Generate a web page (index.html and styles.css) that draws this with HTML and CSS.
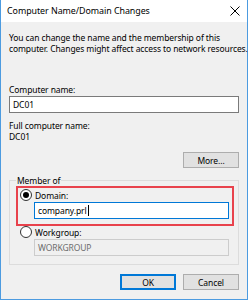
FILE: index.html
```html
<!DOCTYPE html>
<html>
<head>
<meta charset="utf-8">
<link rel="stylesheet" href="styles.css">
</head>
<body>
<div class="window">
  <div class="titlebar">
    <span class="title">Computer Name/Domain Changes</span>
    <svg class="close" width="10" height="10" viewBox="0 0 10 10"><path d="M0.5 0.5 L9.5 9.5 M9.5 0.5 L0.5 9.5" stroke="#000" stroke-width="1" fill="none"/></svg>
  </div>
  <div class="content">
    <p class="desc">You can change the name and the membership of this<br>computer. Changes might affect access to network resources.</p>
    <div class="label l-compname">Computer name:</div>
    <div class="input">DC01</div>
    <div class="label l-full">Full computer name:</div>
    <div class="label">DC01</div>
    <div class="row-right"><div class="btn more">More...</div></div>
    <fieldset class="group">
      <legend>Member of</legend>
      <div class="highlight">
        <div class="radio-row"><span class="radio checked"></span><span>Domain:</span></div>
        <div class="input focus sub">company.prl<span class="caret"></span></div>
      </div>
      <div class="radio-row wg"><span class="radio"></span><span>Workgroup:</span></div>
      <div class="input disabled sub">WORKGROUP</div>
    </fieldset>
    <div class="buttons"><div class="btn default">OK</div><div class="btn">Cancel</div></div>
  </div>
</div>
</body>
</html>
```
FILE: styles.css
```css
html, body { margin: 0; padding: 0; background: #f0f0f0; }
body { font-family: "Noto Sans", "Liberation Sans", sans-serif; font-size: 8.5px; letter-spacing: -0.1px; color: #000; }
.window {
  width: 248px; height: 300px; box-sizing: border-box;
  border: 1px solid #4c9be0; border-top: none;
  background: #f0f0f0; display: flex; flex-direction: column;
}
.titlebar {
  height: 22px; background: #fff; display: flex; align-items: center;
  justify-content: space-between; padding: 0 7px 0 6px; flex: none;
}
.title { font-size: 8.9px; line-height: 12px; letter-spacing: -0.05px; }
.close { display: block; }
.content { padding: 0 8px; display: flex; flex-direction: column; line-height: 11px; }
.desc { margin: 10px 0 0; line-height: 11px; white-space: nowrap; }
.label { height: 11px; }
.l-compname { margin-top: 30px; }
.l-full { margin-top: 7px; }
.input {
  margin-top: 1px; height: 17px; box-sizing: border-box; background: #fff;
  border: 1px solid #7a7a7a; padding: 0 3px; display: flex; align-items: center;
}
.input.sub { margin-left: 14px; width: 195px; }
.input.focus { border-color: #0078d7; }
.input.disabled { background: #f0f0f0; border-color: #cccccc; color: #6d6d6d; }
.caret { display: inline-block; width: 1px; height: 11px; background: #000; margin-left: 1px; }
.row-right { display: flex; justify-content: flex-end; margin-top: 10px; }
.btn {
  width: 56px; height: 16px; box-sizing: border-box; background: #e1e1e1;
  border: 1px solid #adadad; display: flex; align-items: center; justify-content: center;
}
.btn.default { border-color: #0078d7; box-shadow: inset 0 0 0 1px #0078d7; }
.group {
  margin: 7px 0 0; padding: 0 6px 8px; border: 1px solid #dcdcdc; min-width: 0;
}
.group legend { padding: 0 1px; line-height: 11px; }
.highlight { border: 2px solid #e8424c; padding: 1px 0 5px 2px; width: 212px; }
.radio-row { height: 12px; display: flex; align-items: center; gap: 3px; }
.wg { margin-left: 4px; }
.radio {
  width: 12px; height: 12px; box-sizing: border-box; border: 1px solid #333;
  border-radius: 50%; background: #fff; display: flex; align-items: center; justify-content: center;
}
.radio.checked::after { content: ""; width: 6px; height: 6px; border-radius: 50%; background: #000; }
.group > .input.sub { margin-left: 18px; }
.buttons { display: flex; justify-content: flex-end; gap: 7px; margin-top: 9px; }
```
